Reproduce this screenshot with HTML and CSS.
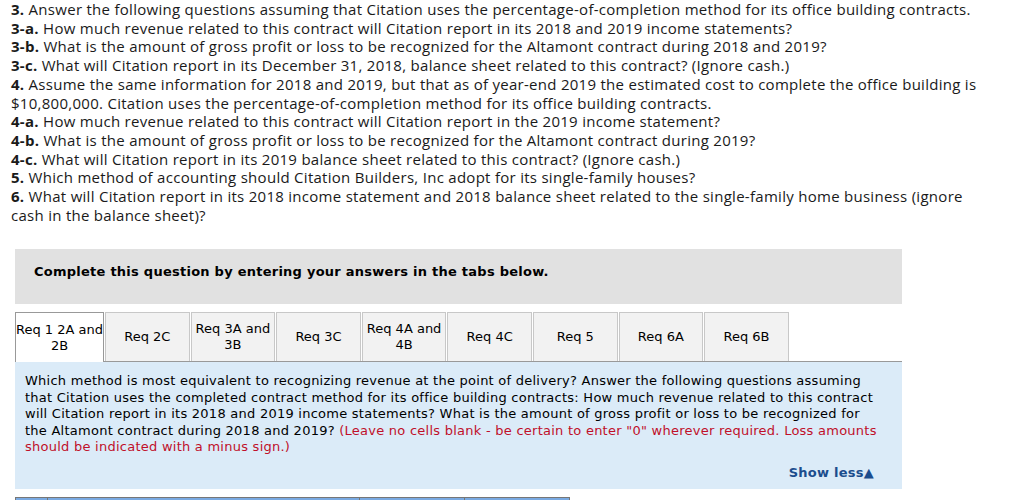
FILE: index.html
```html
<!DOCTYPE html>
<html>
  <head>
    <link rel="stylesheet" href="styles.css">
    <title>Citation Builders</title>
    <meta charset="UTF-8">
  </head>
  <body>
    <div class="question">
      <b>3.</b> Answer the following questions assuming that Citation uses the percentage-of-completion method for its office building contracts.<br>
      <b>3-a.</b> How much revenue related to this contract will Citation report in its 2018 and 2019 income statements?<br>
      <b>3-b.</b> What is the amount of gross profit or loss to be recognized for the Altamont contract during 2018 and 2019?<br>
      <b>3-c.</b> What will Citation report in its December 31, 2018, balance sheet related to this contract? (Ignore cash.)<br>
      <b>4.</b> Assume the same information for 2018 and 2019, but that as of year-end 2019 the estimated cost to complete the office building is $10,800,000. Citation uses the percentage-of-completion method for its office building contracts.<br>
      <b>4-a.</b> How much revenue related to this contract will Citation report in the 2019 income statement?<br>
      <b>4-b.</b> What is the amount of gross profit or loss to be recognized for the Altamont contract during 2019?<br>
      <b>4-c.</b> What will Citation report in its 2019 balance sheet related to this contract? (Ignore cash.)<br>
      <b>5.</b> Which method of accounting should Citation Builders, Inc adopt for its single-family houses?<br>
      <b>6.</b> What will Citation report in its 2018 income statement and 2018 balance sheet related to the single-family home business (ignore cash in the balance sheet)?
    </div>

    <div class="work">
      <div class="banner">Complete this question by entering your answers in the tabs below.</div>

      <div class="tabs">
        <div class="tab active">Req 1 2A and 2B</div>
        <div class="tab">Req 2C</div>
        <div class="tab">Req 3A and 3B</div>
        <div class="tab">Req 3C</div>
        <div class="tab">Req 4A and 4B</div>
        <div class="tab">Req 4C</div>
        <div class="tab">Req 5</div>
        <div class="tab">Req 6A</div>
        <div class="tab">Req 6B</div>
      </div>

      <div class="panel">
        <p>Which method is most equivalent to recognizing revenue at the point of delivery? Answer the following questions assuming that Citation uses the completed contract method for its office building contracts: How much revenue related to this contract will Citation report in its 2018 and 2019 income statements? What is the amount of gross profit or loss to be recognized for the Altamont contract during 2018 and 2019? <span class="note">(Leave no cells blank - be certain to enter "0" wherever required. Loss amounts should be indicated with a minus sign.)</span></p>
        <div class="more"><a href="#">Show less&#9650;</a></div>
      </div>

      <table class="grid">
        <tr>
          <th class="c1"></th>
          <th class="c2"></th>
          <th class="c3"></th>
          <th class="c4"></th>
        </tr>
      </table>
    </div>
  </body>
</html>
```

FILE: styles.css
```css
body {
  margin: 0;
  background: #fff;
  color: #1a1a1a;
}
.question {
  font-family: "Open Sans", "Liberation Sans", sans-serif;
  font-size: 15px;
  letter-spacing: 0.28px;
  line-height: 18.7px;
  padding: 0 40px 0 11px;
}
.question b {
  font-weight: 700;
}
.work {
  margin: 25px 0 0 15px;
  width: 887px;
  font-family: "DejaVu Sans", Verdana, sans-serif;
  font-size: 13px;
  letter-spacing: 0.25px;
  color: #000;
}
.banner {
  background: #e1e1e1;
  height: 55px;
  box-sizing: border-box;
  padding: 15px 0 0 19px;
  font-weight: bold;
  line-height: 16px;
}
.tabs {
  display: flex;
  margin-top: 8px;
  border-bottom: 1px solid #999;
  height: 49px;
}
.tab {
  width: 84.6px;
  flex-shrink: 0;
  margin-right: 1px;
  height: 49px;
  box-sizing: border-box;
  border: 1px solid #c8c8c8;
  border-bottom: none;
  background: #f2f2f2;
  display: flex;
  align-items: center;
  justify-content: center;
  text-align: center;
  line-height: 16px;
  letter-spacing: 0;
}
.tab.active {
  background: #fff;
  border-color: #999;
  height: 50px;
  margin-bottom: -1px;
  width: 89px;
}
.panel {
  background: #dbebf8;
  height: 127px;
  box-sizing: border-box;
  padding: 11px 20px 0 10px;
}
.panel p {
  margin: 0;
  line-height: 16.5px;
}
.note {
  color: #c0102a;
}
.more {
  text-align: right;
  margin-top: 9px;
  padding-right: 8px;
}
.more a {
  color: #1c4d8d;
  font-weight: bold;
  text-decoration: none;
}
.grid {
  margin-top: 8px;
  border-collapse: collapse;
  width: 555px;
}
.grid th {
  background: #7aaae2;
  border: 1px solid #777;
  height: 20px;
}
.c1 { width: 30px; }
.c2 { width: 316px; }
.c3 { width: 104px; }
.c4 { width: 104px; }
```
